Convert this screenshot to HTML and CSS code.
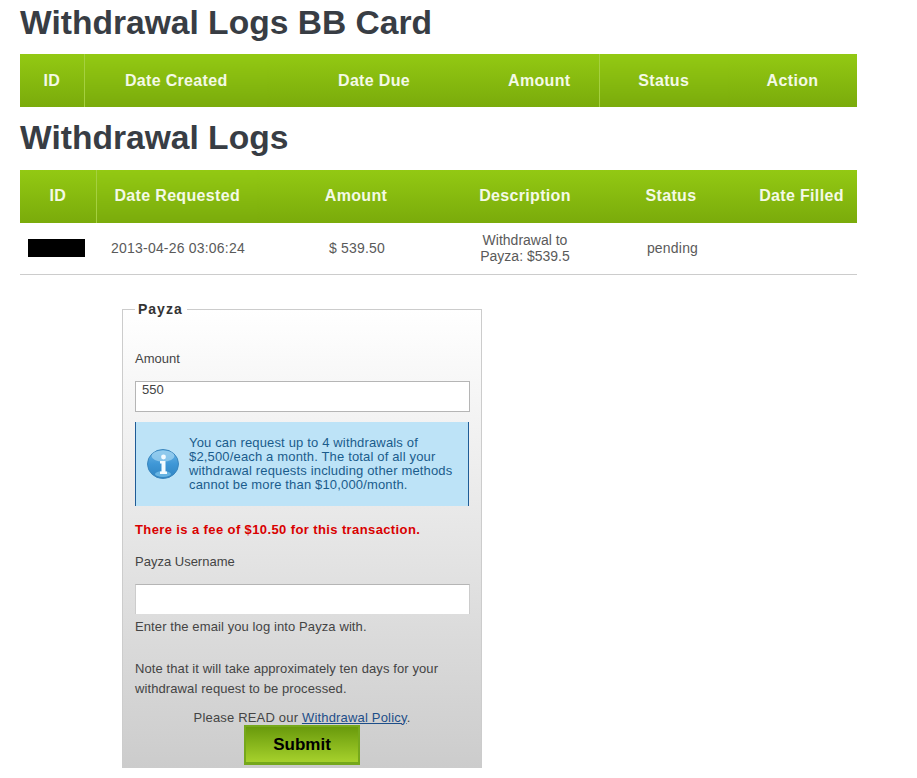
FILE: index.html
```html
<!DOCTYPE html>
<html lang="en">
<head>
<meta charset="utf-8">
<title>Withdrawal Logs</title>
<link rel="stylesheet" href="styles.css">
</head>
<body>
<main class="page">
  <h1 class="title title-first">Withdrawal Logs BB Card</h1>
  <table class="logs">
    <colgroup>
      <col class="c64"><col class="c184"><col class="c212"><col class="c119"><col class="c129"><col class="c129">
    </colgroup>
    <thead>
      <tr><th class="sep">ID</th><th>Date Created</th><th>Date Due</th><th class="sep">Amount</th><th>Status</th><th>Action</th></tr>
    </thead>
  </table>
  <h1 class="title title-second">Withdrawal Logs</h1>
  <table class="logs logs-data">
    <colgroup>
      <col class="c76"><col class="c162"><col class="c196"><col class="c142"><col class="c150"><col class="c111">
    </colgroup>
    <thead>
      <tr><th class="sep">ID</th><th>Date Requested</th><th>Amount</th><th>Description</th><th>Status</th><th>Date Filled</th></tr>
    </thead>
    <tbody>
      <tr>
        <td><span class="redact"></span></td>
        <td class="nudge">2013-04-26 03:06:24</td>
        <td class="nudge">$ 539.50</td>
        <td class="desc">Withdrawal to<br>Payza: $539.5</td>
        <td class="nudge-more">pending</td>
        <td></td>
      </tr>
    </tbody>
  </table>

  <form class="form">
    <fieldset class="box">
      <legend class="legend">Payza</legend>
      <label class="label label-amount" for="amount">Amount</label>
      <input class="field field-amount" id="amount" type="text" value="550">
      <div class="info">
        <svg class="info-icon" width="32" height="30" viewBox="0 0 32 30" aria-hidden="true">
          <defs>
            <linearGradient id="ball" x1="0" y1="0" x2="0" y2="1">
              <stop offset="0" stop-color="#6db6e6"/>
              <stop offset="0.5" stop-color="#3f97d6"/>
              <stop offset="1" stop-color="#2f84c2"/>
            </linearGradient>
          </defs>
          <ellipse cx="16" cy="15" rx="15.5" ry="14.5" fill="url(#ball)" stroke="#3b86bd"/>
          <ellipse cx="16" cy="7" rx="11.5" ry="5.5" fill="#a9d8f3" opacity="0.65"/>
          <ellipse cx="16" cy="25" rx="8" ry="3" fill="#7cc4ec" opacity="0.7"/>
          <circle cx="16.5" cy="8" r="2.4" fill="#f4fbff"/>
          <path d="M13 12h5.500v10.500H20V25h-7v-2.500h1.500v-8H13z" fill="#f4fbff"/>
        </svg>
        <p class="info-text">You can request up to 4 withdrawals of $2,500/each a month. The total of all your withdrawal requests including other methods cannot be more than $10,000/month.</p>
      </div>
      <p class="fee">There is a fee of $10.50 for this transaction.</p>
      <label class="label label-user" for="user">Payza Username</label>
      <input class="field field-user" id="user" type="text">
      <p class="note note-help">Enter the email you log into Payza with.</p>
      <p class="note note-time">Note that it will take approximately ten days for your withdrawal request to be processed.</p>
      <p class="policy">Please READ our <a class="policy-link" href="#">Withdrawal Policy</a>.</p>
      <div class="actions"><button class="submit" type="button">Submit</button></div>
    </fieldset>
  </form>
</main>
</body>
</html>
```
FILE: styles.css
```css
* { box-sizing: border-box; }
html, body { margin: 0; padding: 0; background: #fff; }
body { font-family: "Liberation Sans", Arial, sans-serif; color: #555; height: 778px; overflow: hidden; }
.page { padding: 0 60px 0 20px; width: 917px; }

.title { margin: 0; font-size: 33.6px; font-weight: bold; color: #383d44; line-height: 38px; }
.title-first { padding-top: 4px; height: 54px; }
.title-second { padding-top: 12px; height: 63px; }

.logs { width: 837px; border-collapse: collapse; table-layout: fixed; }
.c64 { width: 64px; } .c184 { width: 184px; } .c212 { width: 212px; } .c119 { width: 119px; } .c129 { width: 129px; }
.c76 { width: 76px; } .c162 { width: 162px; } .c196 { width: 196px; } .c142 { width: 142px; } .c150 { width: 150px; } .c111 { width: 111px; }

.logs th {
  height: 53px; padding: 0; font-size: 16px; font-weight: bold; color: #f4f9e6;
  letter-spacing: 0.33px; text-align: center;
  background: linear-gradient(#93c913, #7aab0b);
}
.logs-data th { padding-bottom: 2px; }
.logs th.sep { border-right: 1px solid #a5d03f; }
.logs td {
  height: 51px; padding: 0 0 1px; font-size: 14px; line-height: 16px; color: #5a5a5a;
  letter-spacing: 0.2px; text-align: center; border-bottom: 1px solid #ccc;
}
.logs td.nudge { padding-left: 2px; }
.logs td.nudge-more { padding-left: 3px; }
.logs td.desc { letter-spacing: 0; }
.redact { display: block; width: 57px; height: 18px; margin: 0 0 0 8px; background: #000; }

.form { margin: 27px 0 0 102px; width: 360px; }
.box {
  margin: 0; padding: 0 12px; width: 360px; height: 466px; display: block; min-width: 0;
  border: 1px solid #ccc; border-bottom: 0;
  background: linear-gradient(#fff, #ccc);
}
.legend { margin-left: 0; padding: 0 4px 0 3px; font-size: 14px; font-weight: bold; line-height: 15px; color: #333; letter-spacing: 1px; }

.label { display: block; font-size: 13px; line-height: 14px; color: #444; }
.label-amount { margin-top: 35px; }
.label-user { margin-top: 18px; }

.field { display: block; width: 335px; height: 31px; margin: 0; background: #fff; border: 1px solid #b5b5b5; font: 13px "Liberation Sans", Arial, sans-serif; color: #444; }
.field-amount { margin-top: 15px; padding: 0 0 14px 6px; }
.field-user { margin-top: 15px; height: 30px; border-bottom: 0; border-color: #ccc; border-top-color: #b5b5b5; }

.info {
  display: flex; align-items: center; width: 334px; height: 84px; margin-top: 10px; padding-left: 11px;
  background: #bde3f7; border: solid #1f5c96; border-width: 0 1px;
}
.info-icon { flex: none; margin-right: 10px; }
.info-text { margin: 0; font-size: 13px; line-height: 14px; color: #1a5c8c; width: 270px; letter-spacing: 0.16px; }

.fee { margin: 16px 0 0; font-size: 13px; font-weight: bold; line-height: 15px; color: #d90000; letter-spacing: 0.39px; }
.note { margin: 0; font-size: 13px; line-height: 20px; color: #444; letter-spacing: 0.1px; }
.note-help { margin-top: 3px; }
.note-time { margin-top: 22px; }
.policy { margin: 12px 0 0; font-size: 13px; line-height: 14px; text-align: center; color: #444; letter-spacing: 0.18px; }
.policy-link { color: #1d4e89; }

.actions { display: flex; justify-content: center; margin-top: 0; }
.submit {
  width: 116px; height: 40px; padding: 1px 0 0; font: bold 17px "Liberation Sans", Arial, sans-serif; color: #000; cursor: pointer;
  background: linear-gradient(#699a0c, #a6d12c);
  border: 2px solid #76a81c; border-bottom-width: 3px;
}
```
